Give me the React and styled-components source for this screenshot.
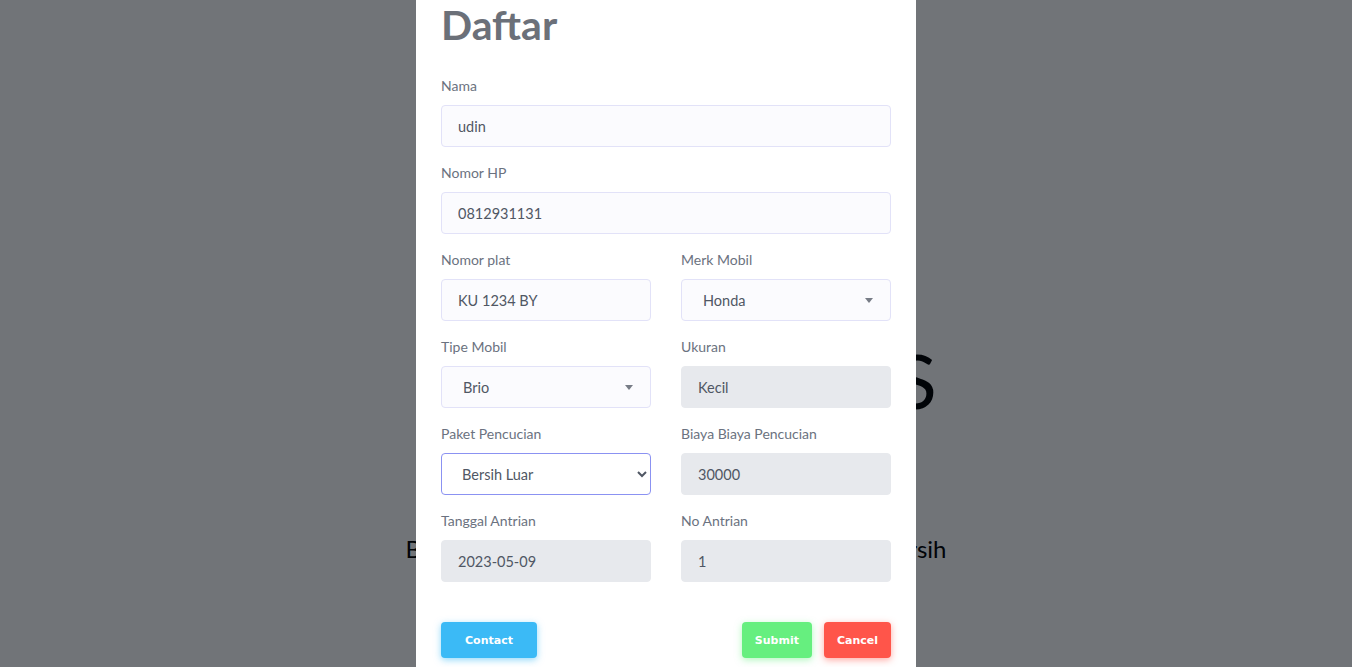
import styled, { createGlobalStyle } from "styled-components";

const GlobalStyle = createGlobalStyle`
    html, body {
        margin: 0;
        padding: 0;
        height: 100%;
        overflow: hidden;
        background: #ffffff;
        font-family: "Lato", "Noto Sans", sans-serif;
    }
    * { box-sizing: border-box; }
`

const Page = styled.main`
    min-height: 100vh;
    display: flex;
    flex-direction: column;
    align-items: center;
    padding-top: 334px;
    color: #000;
`
const HeroTitle = styled.h1`
    margin: 0;
    font-size: 76px;
    font-weight: 400;
    line-height: 1.2;
    letter-spacing: 4px;
    padding-left: 36px;
`
const HeroText = styled.p`
    margin: 108px 0 0;
    font-size: 24px;
    line-height: 1.3;
`

const Backdrop = styled.div`
    position: fixed;
    inset: 0;
    background: rgba(1, 7, 14, 0.56);
    display: flex;
    justify-content: center;
    align-items: flex-start;
    padding-right: 20px;
    overflow: hidden;
`
const Modal = styled.form`
    width: 500px;
    background: #fff;
    padding: 0 25px 30px;
    display: flex;
    flex-direction: column;
`
const Title = styled.h2`
    margin: 0 0 26px;
    font-size: 41px;
    line-height: 50px;
    font-weight: 700;
    color: #6b7079;
`
const Grid = styled.div`
    display: grid;
    grid-template-columns: minmax(0, 1fr) minmax(0, 1fr);
    column-gap: 30px;
    row-gap: 16px;
`
const Field = styled.div`
    display: flex;
    flex-direction: column;
    min-width: 0;
    grid-column: ${p => (p.$full ? "1 / -1" : "auto")};
`
const Label = styled.label`
    font-size: 14px;
    line-height: 20px;
    color: #6b7280;
    margin-bottom: 9px;
`
const Input = styled.input`
    width: 100%;
    height: 42px;
    border: 1px solid #e2e2f8;
    border-radius: 4px;
    background: ${p => (p.disabled ? "#e7e9ed" : "#fbfbfe")};
    border-color: ${p => (p.disabled ? "#e7e9ed" : "#e2e2f8")};
    padding: 0 16px;
    font-family: inherit;
    font-size: 14.5px;
    color: #505764;
    outline: none;
    &:disabled { color: #505764; }
`
const FakeSelect = styled.div`
    height: 42px;
    border: 1px solid #e2e2f8;
    border-radius: 4px;
    background: #fbfbfe;
    padding: 0 17px 0 21px;
    display: flex;
    align-items: center;
    justify-content: space-between;
    font-size: 14.5px;
    color: #505764;
`
const Caret = styled.span`
    width: 0;
    height: 0;
    border-left: 4px solid transparent;
    border-right: 4px solid transparent;
    border-top: 5px solid #777c86;
`
const NativeSelect = styled.select`
    width: 100%;
    height: 42px;
    border: 1px solid #8b92f2;
    border-radius: 4px;
    background: #fff;
    padding: 0 10px 0 16px;
    font-family: inherit;
    font-size: 14.5px;
    color: #505764;
    outline: none;
`
const Actions = styled.div`
    display: flex;
    align-items: center;
    margin-top: 40px;
    gap: 12px;
`
const Button = styled.button`
    height: 36px;
    padding: 0 ${p => p.$pad || 24}px;
    border: none;
    border-radius: 4px;
    background: ${p => p.$bg};
    box-shadow: 0 2px 7px ${p => p.$shadow};
    color: #fff;
    font-family: "DejaVu Sans", Verdana, sans-serif;
    font-weight: 700;
    font-size: 11px;
    cursor: pointer;
    margin-left: ${p => (p.$push ? "auto" : "0")};
`

function Select({ value }) {
    return (
        <FakeSelect>
            <span>{value}</span>
            <Caret />
        </FakeSelect>
    )
}

export default function App() {
    return (
        <>
            <GlobalStyle />
            <Page>
                <HeroTitle>CLEAN CARS</HeroTitle>
                <HeroText>Bersihkan mobil anda dengan cepat dan hasil bersih</HeroText>
            </Page>
            <Backdrop>
                <Modal onSubmit={e => e.preventDefault()}>
                    <Title>Daftar</Title>
                    <Grid>
                        <Field $full>
                            <Label>Nama</Label>
                            <Input defaultValue="udin" />
                        </Field>
                        <Field $full>
                            <Label>Nomor HP</Label>
                            <Input defaultValue="0812931131" />
                        </Field>
                        <Field>
                            <Label>Nomor plat</Label>
                            <Input defaultValue="KU 1234 BY" />
                        </Field>
                        <Field>
                            <Label>Merk Mobil</Label>
                            <Select value="Honda" />
                        </Field>
                        <Field>
                            <Label>Tipe Mobil</Label>
                            <Select value="Brio" />
                        </Field>
                        <Field>
                            <Label>Ukuran</Label>
                            <Input disabled defaultValue="Kecil" />
                        </Field>
                        <Field>
                            <Label>Paket Pencucian</Label>
                            <NativeSelect defaultValue="luar">
                                <option value="luar">Bersih Luar</option>
                                <option value="dalam">Bersih Dalam</option>
                                <option value="full">Bersih Luar Dalam</option>
                            </NativeSelect>
                        </Field>
                        <Field>
                            <Label>Biaya Biaya Pencucian</Label>
                            <Input disabled defaultValue="30000" />
                        </Field>
                        <Field>
                            <Label>Tanggal Antrian</Label>
                            <Input disabled defaultValue="2023-05-09" />
                        </Field>
                        <Field>
                            <Label>No Antrian</Label>
                            <Input disabled defaultValue="1" />
                        </Field>
                    </Grid>
                    <Actions>
                        <Button type="button" $bg="#3bbaf6" $shadow="rgba(59,186,246,0.55)">Contact</Button>
                        <Button type="submit" $push $pad={13} $bg="#66ef7f" $shadow="rgba(102,239,127,0.5)">Submit</Button>
                        <Button type="button" $pad={13} $bg="#ff554a" $shadow="rgba(255,85,74,0.5)">Cancel</Button>
                    </Actions>
                </Modal>
            </Backdrop>
        </>
    )
}
